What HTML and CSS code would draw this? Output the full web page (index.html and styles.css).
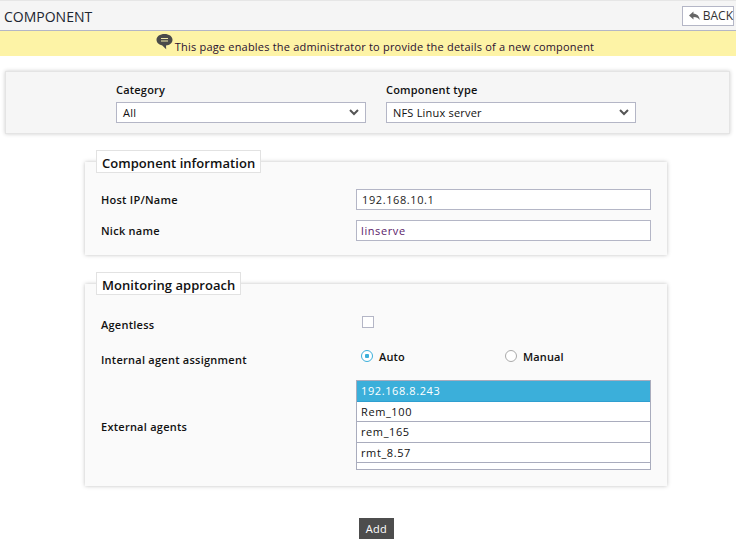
FILE: index.html
```html
<!DOCTYPE html>
<html lang="en">
<head>
    <meta charset="UTF-8">
    <meta name="viewport" content="width=device-width, initial-scale=1.0">
    <title>Component</title>
    <link rel="stylesheet" href="styles.css">
</head>
<body>
    <div class="page-head">
        <h1>COMPONENT</h1>
        <a href="#" class="back">
            <svg width="12" height="10" viewBox="0 0 12 10"><path d="M0 4.5 5 0v2.600c4 0 6.500 2.400 7 7-1.400-2.600-3.500-3.600-7-3.600V9z" fill="#666"/></svg>
            BACK
        </a>
    </div>
    <div class="notice">
        <svg class="notice-icon" width="17" height="16" viewBox="0 0 17 16"><path d="M8.500 0C13 0 16.500 2.400 16.500 5.800c0 3.200-3 5.500-6.500 5.700l.2 3.800-3.900-3.900C3 10.800.5 8.800.5 5.800.5 2.400 4 0 8.500 0z" fill="#4a4a4a"/><path d="M5 4.500h7M5 7h7" stroke="#efe9a8" stroke-width="1.200"/></svg>
        <span>This page enables the administrator to provide the details of a new component</span>
    </div>

    <div class="filter-panel">
        <div class="filter">
            <label>Category</label>
            <div class="select">
                <span>All</span>
                <svg width="10" height="7" viewBox="0 0 10 7"><path d="M1 1l4 4 4-4" fill="none" stroke="#555" stroke-width="2"/></svg>
            </div>
        </div>
        <div class="filter">
            <label>Component type</label>
            <div class="select">
                <span>NFS Linux server</span>
                <svg width="10" height="7" viewBox="0 0 10 7"><path d="M1 1l4 4 4-4" fill="none" stroke="#555" stroke-width="2"/></svg>
            </div>
        </div>
    </div>

    <fieldset class="group info-group">
        <legend>Component information</legend>
        <div class="row">
            <label>Host IP/Name</label>
            <input type="text" class="text-input" value="192.168.10.1">
        </div>
        <div class="row">
            <label>Nick name</label>
            <input type="text" class="text-input nick" value="linserve">
        </div>
    </fieldset>

    <fieldset class="group approach-group">
        <legend>Monitoring approach</legend>
        <div class="row agentless-row">
            <label>Agentless</label>
            <span class="checkbox"></span>
        </div>
        <div class="row radio-row">
            <label>Internal agent assignment</label>
            <div class="radios">
                <span class="radio-item"><span class="radio checked"></span>Auto</span>
                <span class="radio-item"><span class="radio"></span>Manual</span>
            </div>
        </div>
        <div class="row agents-row">
            <label>External agents</label>
            <ul class="agent-list">
                <li class="selected">192.168.8.243</li>
                <li>Rem_100</li>
                <li>rem_165</li>
                <li>rmt_8.57</li>
                <li class="empty"></li>
            </ul>
        </div>
    </fieldset>

    <div class="actions">
        <button class="add-button">Add</button>
    </div>
</body>
</html>
```

FILE: styles.css
```css
* {
    box-sizing: border-box;
}
body {
    margin: 0;
    font-family: "Open Sans", sans-serif;
    font-size: 11px;
    letter-spacing: 0.6px;
    color: #111;
    background: #fff;
}
.page-head {
    display: flex;
    justify-content: space-between;
    align-items: center;
    height: 31px;
    padding: 0 2px 0 4px;
    background: #f5f5f5;
    border-top: 1px solid #e6e6e6;
    border-bottom: 1px solid #b4b6c6;
}
h1 {
    margin: 2px 0 0;
    font-size: 14px;
    font-weight: 400;
    letter-spacing: 0;
    color: #1c2530;
}
.back {
    display: flex;
    align-items: center;
    gap: 3px;
    height: 20px;
    width: 52px;
    padding-left: 6px;
    background: #fff;
    border: 1px solid #b4b6c6;
    color: #333;
    font-size: 12px;
    letter-spacing: 0;
    text-decoration: none;
}
.notice {
    display: flex;
    justify-content: center;
    height: 25px;
    padding: 3px 0 0 14px;
    background: #fdf3a6;
    color: #2a1030;
    letter-spacing: 0.2px;
}
.notice span {
    margin: 5px 0 0 2px;
}
.filter-panel {
    display: flex;
    gap: 20px;
    height: 63px;
    margin: 15px 6px 0 5px;
    padding: 10px 0 0 110px;
    background: #f6f6f6;
    border: 1px solid #e4e4e4;
    box-shadow: 0 0 4px rgba(0, 0, 0, 0.2);
}
.filter {
    width: 250px;
}
.filter label {
    display: block;
    margin-bottom: 5px;
    font-weight: 600;
    letter-spacing: 0.2px;
}
.select {
    display: flex;
    justify-content: space-between;
    align-items: center;
    height: 21px;
    padding: 0 6px;
    background: #fff;
    border: 1px solid #b4b6c6;
    letter-spacing: 0.2px;
}
.group {
    width: 581px;
    margin: 0 0 0 85px;
    padding: 0 16px;
    background: #fafafa;
    border: 0;
    box-shadow: 0 0 4px rgba(0, 0, 0, 0.25);
}
.group legend {
    height: 23px;
    margin-left: -5px;
    padding: 3px 5px 0;
    background: #fff;
    border: 1px solid #e2e2e2;
    font-size: 13px;
    font-weight: 600;
    letter-spacing: 0.05px;
}
.info-group {
    height: 105px;
    margin-top: 16px;
}
.approach-group {
    height: 214px;
    margin-top: 17px;
}
.row {
    display: flex;
    align-items: center;
}
.row label {
    width: 255px;
    font-weight: 600;
    letter-spacing: 0.25px;
}
.info-group .row {
    height: 21px;
    margin-bottom: 10px;
}
.info-group .row:first-of-type {
    margin-top: 16px;
}
.text-input {
    width: 295px;
    height: 21px;
    padding: 0 5px;
    border: 1px solid #b4b6c6;
    font-family: inherit;
    font-size: 11px;
    letter-spacing: 0.6px;
    color: #222;
}
.text-input.nick {
    padding-left: 4px;
    color: #5a1a6a;
}
.agentless-row {
    height: 20px;
    margin-top: 19px;
}
.checkbox {
    width: 12px;
    height: 12px;
    margin: -4px 0 0 6px;
    background: #fff;
    border: 1px solid #b4b6c6;
}
.radio-row {
    height: 20px;
    margin-top: 15px;
}
.radios {
    display: flex;
    margin: -6px 0 0 5px;
    font-weight: 600;
    letter-spacing: 0.15px;
}
.radio-item {
    display: flex;
    align-items: center;
    gap: 6px;
    width: 144px;
}
.radio {
    width: 12px;
    height: 12px;
    border: 1px solid #aaa;
    border-radius: 50%;
    background: #fff;
}
.radio.checked {
    border-color: #3bafda;
    background: radial-gradient(circle, #3bafda 0 2px, #fff 2.5px);
}
.agents-row {
    margin-top: 11px;
}
.agents-row label {
    margin-top: 2px;
}
.agent-list {
    width: 295px;
    height: 90px;
    margin: 0;
    padding: 0;
    list-style: none;
    background: #fff;
    border: 1px solid #a9acbd;
}
.agent-list li {
    height: 20.500px;
    padding: 2px 4px;
    border-bottom: 1px solid #a9acbd;
}
.agent-list li.selected {
    background: #3bafda;
    color: #fff;
    border-bottom-color: #2f9fd0;
}
.agent-list li.empty {
    height: 6px;
    border-bottom: 0;
}
.actions {
    display: flex;
    justify-content: center;
    margin-top: 32px;
    padding-left: 16px;
}
.add-button {
    width: 35px;
    height: 21px;
    padding: 0 0 0 1px;
    background: #4d4d4d;
    border: 0;
    color: #fff;
    font-family: inherit;
    font-size: 11px;
    letter-spacing: 0.3px;
}
```
